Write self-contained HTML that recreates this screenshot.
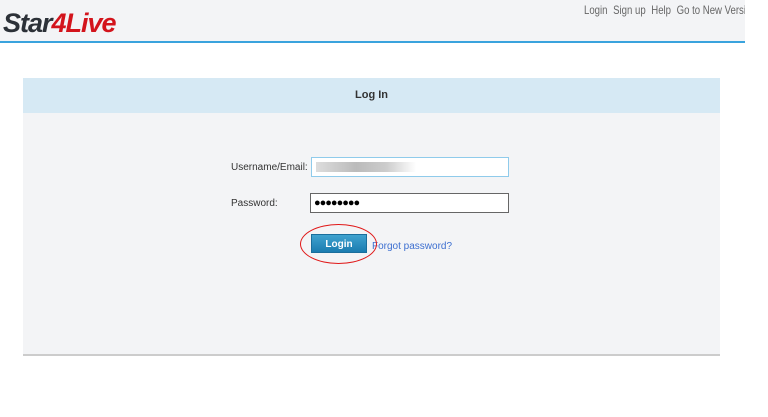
<!DOCTYPE html><html><head><style>
body{margin:0;width:768px;height:417px;background:#fff;font-family:"Liberation Sans",Arial,sans-serif;position:relative;overflow:hidden}
.hdr{position:absolute;left:0;top:0;width:745px;height:41px;background:#f3f4f6;border-bottom:2px solid #3aa3dd;overflow:hidden}
.logo{position:absolute;left:3px;top:8px;font-size:27px;font-weight:bold;font-style:italic;color:#2c3138;letter-spacing:-1px}
.logo span{color:#d3141c}
.nav{position:absolute;left:584px;top:3px;font-size:12px;color:#666;white-space:nowrap;transform:scaleX(0.8);transform-origin:left}
.nav b{font-weight:normal;margin-right:7px}
.ph{position:absolute;left:23px;top:78px;width:697px;height:35px;background:#d6e9f4;text-align:center;line-height:35px;font-size:11px;font-weight:bold;color:#333}
.pb{position:absolute;left:23px;top:113px;width:697px;height:241px;background:#f3f4f6;border-bottom:2px solid #ccc}
.lab{position:absolute;font-size:10px;color:#333}
.in{position:absolute;background:#fff;box-sizing:border-box}
</style></head><body>
<div class="hdr"><div class="logo">Star<span>4Live</span></div><div class="nav"><b>Login</b><b>Sign up</b><b>Help</b>Go to New Version</div></div>
<div class="ph">Log In</div>
<div class="pb"></div>
<div class="lab" style="left:231px;top:162px">Username/Email:</div>
<div class="in" style="left:311px;top:157px;width:198px;height:20px;border:1px solid #8fcbeb"><div style="position:absolute;left:4px;top:4px;width:100px;height:10px;background:linear-gradient(90deg,#ddd,#bbb 40%,#ccc 70%,#fff)"></div></div>
<div class="lab" style="left:231px;top:198px">Password:</div>
<div class="in" style="left:310px;top:193px;width:199px;height:20px;border:1px solid #666;font-size:11px;line-height:18px;padding-left:3px;letter-spacing:-1px">●●●●●●●●</div>
<div style="position:absolute;left:311px;top:234px;width:56px;height:19px;background:linear-gradient(#3fa2cf,#1b7cb0);border:1px solid #1a6e9c;color:#fff;font-size:10px;font-weight:bold;text-align:center;line-height:19px;box-sizing:border-box">Login</div>
<div style="position:absolute;left:372px;top:241px;font-size:10px;color:#3d6fd0">Forgot password?</div>
<div style="position:absolute;left:300px;top:224px;width:77px;height:40px;border:1.5px solid #e01818;border-radius:50%;box-sizing:border-box"></div>
</body></html>
